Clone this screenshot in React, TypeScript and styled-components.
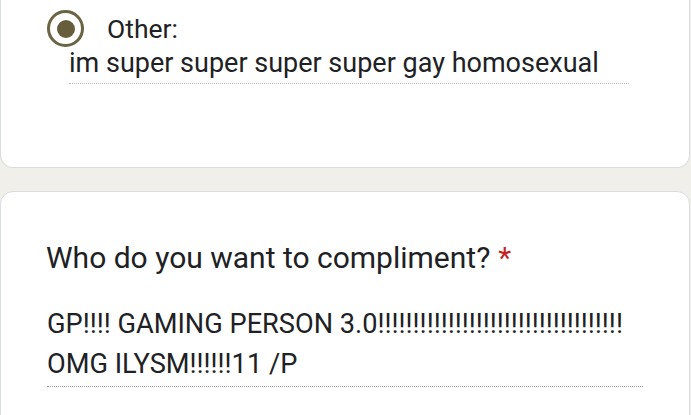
import React from 'react';
import styled, { createGlobalStyle } from 'styled-components';

const GlobalStyle = createGlobalStyle`
  html, body {
    margin: 0;
    padding: 0;
    background: #f0efe9;
    font-family: Roboto, "Noto Sans", sans-serif;
    color: #202124;
  }
`;

const Page = styled.div`
  display: flex;
  flex-direction: column;
  gap: 23px;
  width: 691px;
`;

const Card = styled.section<{ $cut?: boolean }>`
  background: #fff;
  border: 1px solid #dadce0;
  border-top: ${p => (p.$cut ? 'none' : '1px solid #dadce0')};
  border-radius: ${p => (p.$cut ? '0 0 13px 13px' : '13px 13px 0 0')};
  margin: 0 1px 0 0;
  box-sizing: border-box;
`;

const OptionRow = styled.div`
  display: flex;
  align-items: center;
  gap: 23px;
  padding: 10px 0 0 46px;
`;

const Radio = styled.span`
  width: 37px;
  height: 37px;
  border-radius: 50%;
  border: 3.5px solid #6b6443;
  box-sizing: border-box;
  display: flex;
  align-items: center;
  justify-content: center;
  &::after {
    content: '';
    width: 18px;
    height: 18px;
    border-radius: 50%;
    background: #655d3c;
  }
`;

const OptionLabel = styled.span`
  font-size: 26.5px;
  line-height: 36px;
`;

const OtherInput = styled.div<{ $left: number; $width: number }>`
  margin-left: ${p => p.$left}px;
  width: ${p => p.$width}px;
  font-size: 27px;
  line-height: 32px;
  padding-bottom: 4px;
  border-bottom: 1px dotted #bdbdbd;
`;

const Spacer = styled.div<{ $h: number }>`
  height: ${p => p.$h}px;
`;

const Title = styled.h2`
  margin: 0;
  padding: 0 0 0 45px;
  font-size: 30px;
  font-weight: 400;
  line-height: 36px;
`;

const Required = styled.span`
  color: #c5221f;
  margin-left: 8px;
`;

const Answer = styled.div`
  margin: 0 46px 0 46px;
  font-size: 27.2px;
  line-height: 40px;
  padding-bottom: 2px;
  border-bottom: 1px dotted #9e9e9e;
`;

export default function App(): JSX.Element {
  return (
    <>
      <GlobalStyle />
      <Page>
        <Card $cut>
          <OptionRow>
            <Radio />
            <OptionLabel>Other:</OptionLabel>
          </OptionRow>
          <OtherInput $left={68} $width={560}>
            im super super super super gay homosexual
          </OtherInput>
          <Spacer $h={83} />
        </Card>
        <Card>
          <Spacer $h={48} />
          <Title>
            Who do you want to compliment?<Required>*</Required>
          </Title>
          <Spacer $h={28} />
          <Answer>
            GP!!!! GAMING PERSON 3.0!!!!!!!!!!!!!!!!!!!!!!!!!!!!!!!!!!!
            <br />
            OMG ILYSM!!!!!!11 /P
          </Answer>
          <Spacer $h={40} />
        </Card>
      </Page>
    </>
  );
}
